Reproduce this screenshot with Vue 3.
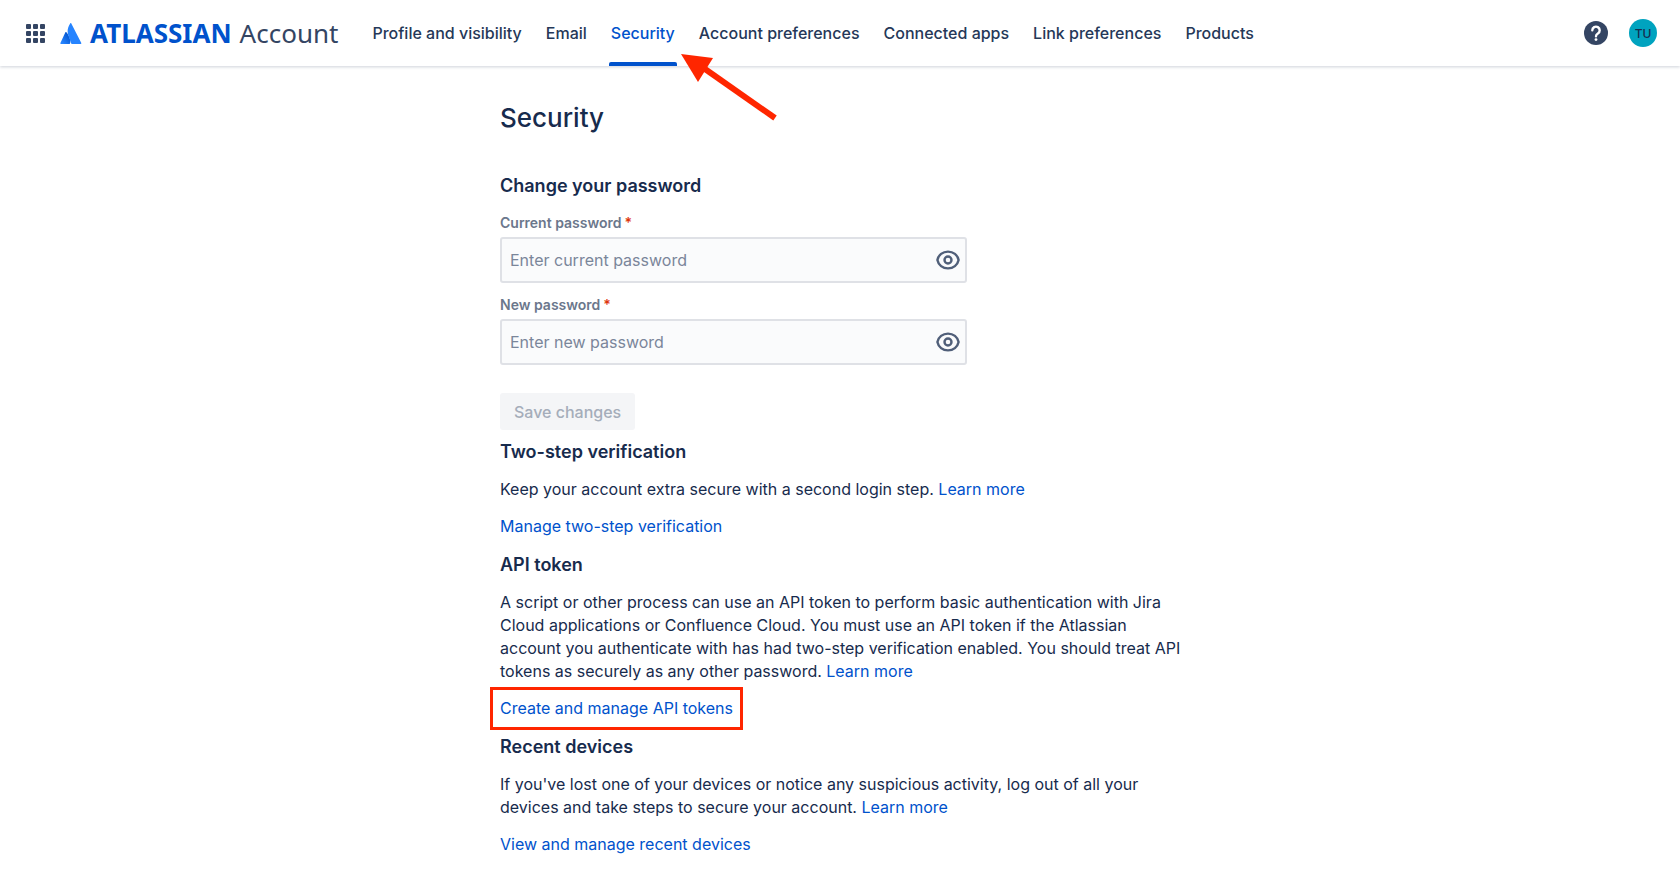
<template>
  <div class="page">
    <header class="top-nav">
      <button class="icon-button switcher" aria-label="Switch to another product">
        <svg width="20" height="20" viewBox="0 0 20 20" fill="#344563">
          <template v-for="row in 3" :key="row">
            <rect v-for="col in 3" :key="col" :x="col * 7 - 6" :y="row * 7 - 6" width="5" height="5" rx="1" />
          </template>
        </svg>
      </button>

      <a href="#" class="brand">
        <svg width="22" height="21" viewBox="0 0 22 21">
          <defs>
            <linearGradient id="wing" x1="0.9" y1="0.2" x2="0.2" y2="0.9">
              <stop offset="0" stop-color="#0052cc" />
              <stop offset="1" stop-color="#2684ff" />
            </linearGradient>
          </defs>
          <path d="M6.400 9.200c-.3-.4-.8-.3-1 .1L.4 20.100c-.2.5 0 .9.5.9h8.600c.3 0 .5-.1.6-.4C11 17.500 9.200 12.600 6.400 9.200z" fill="url(#wing)" />
          <path d="M10.200.4C7.200 4.600 7 9.600 8.600 13.200l2.600 7.300c.1.300.4.500.7.500h8.800c.5 0 .8-.5.600-.9L11.300.4c-.2-.5-.8-.5-1.100 0z" fill="#2684ff" />
        </svg>
        <span class="brand-name">ATLASSIAN</span>
        <span class="brand-product">Account</span>
      </a>

      <nav class="tabs">
        <a v-for="tab in tabs" :key="tab" href="#" class="tab" :class="{ active: tab === activeTab }">
          {{ tab }}
          <svg v-if="tab === activeTab" class="arrow" width="98" height="68" viewBox="0 0 98 68">
            <path d="M24 15L94 64" stroke="#ff2600" stroke-width="6" />
            <path d="M0 0L32 4L17 28z" fill="#ff2600" />
          </svg>
        </a>
      </nav>

      <div class="nav-actions">
        <button class="icon-button" aria-label="Help">
          <svg width="24" height="24" viewBox="0 0 24 24">
            <circle cx="12" cy="12" r="12" fill="#344563" />
            <path d="M8.300 9.300a3.700 3.700 0 1 1 5.600 3.200c-1.200.7-1.900 1.200-1.900 2.700" fill="none" stroke="#fff" stroke-width="2.400" stroke-linecap="round" />
            <circle cx="12" cy="18.600" r="1.400" fill="#fff" />
          </svg>
        </button>
        <button class="icon-button avatar" aria-label="Your profile">TU</button>
      </div>
    </header>

    <main class="content">
      <h1>Security</h1>

      <form class="password-form" @submit.prevent>
        <h2>Change your password</h2>
        <div v-for="field in fields" :key="field.id" class="field">
          <label :for="field.id">{{ field.label }}<span class="required">*</span></label>
          <div class="input-wrap">
            <input :id="field.id" v-model="field.value" :type="field.visible ? 'text' : 'password'"
              :placeholder="field.placeholder" />
            <button type="button" class="icon-button" aria-label="Show password" @click="field.visible = !field.visible">
              <svg width="24" height="20" viewBox="0 0 24 20" fill="none" stroke="#505f79" stroke-width="2.4">
                <path d="M1.400 10C2.400 5 6.700 1.600 12 1.600S21.600 5 22.600 10c-1 5-5.300 8.400-10.600 8.400S2.400 15 1.400 10z" />
                <circle cx="12" cy="10" r="3.500" />
              </svg>
            </button>
          </div>
        </div>
        <button type="submit" class="save" :disabled="!canSave">Save changes</button>
      </form>

      <section v-for="section in sections" :key="section.title" class="section">
        <h2>{{ section.title }}</h2>
        <p>{{ section.text }} <a href="#">Learn more</a></p>
        <div>
          <a href="#" :class="{ highlighted: section.highlighted }">{{ section.action }}</a>
        </div>
      </section>
    </main>
  </div>
</template>

<script setup>
import { ref, computed } from 'vue';

const tabs = [
  'Profile and visibility',
  'Email',
  'Security',
  'Account preferences',
  'Connected apps',
  'Link preferences',
  'Products',
];
const activeTab = ref('Security');

const fields = ref([
  { id: 'current-password', label: 'Current password', placeholder: 'Enter current password', value: '', visible: false },
  { id: 'new-password', label: 'New password', placeholder: 'Enter new password', value: '', visible: false },
]);

const canSave = computed(() => fields.value.every((field) => field.value));

const sections = [
  {
    title: 'Two-step verification',
    text: 'Keep your account extra secure with a second login step.',
    action: 'Manage two-step verification',
  },
  {
    title: 'API token',
    text: 'A script or other process can use an API token to perform basic authentication with Jira Cloud applications or Confluence Cloud. You must use an API token if the Atlassian account you authenticate with has had two-step verification enabled. You should treat API tokens as securely as any other password.',
    action: 'Create and manage API tokens',
    highlighted: true,
  },
  {
    title: 'Recent devices',
    text: "If you've lost one of your devices or notice any suspicious activity, log out of all your devices and take steps to secure your account.",
    action: 'View and manage recent devices',
  },
];
</script>

<style>
body {
  margin: 0;
  background: #fff;
}
</style>

<style scoped>
.page {
  font-family: Inter, "Liberation Sans", sans-serif;
  font-size: 16px;
  line-height: 23px;
  color: #172b4d;
}

a {
  color: #0052cc;
  text-decoration: none;
}

.icon-button {
  display: flex;
  align-items: center;
  justify-content: center;
  padding: 0;
  border: none;
  background: none;
  cursor: pointer;
}

.top-nav {
  display: flex;
  align-items: center;
  height: 66px;
  padding: 0 23px 0 25px;
  box-shadow: 0 1px 3px rgba(9, 30, 66, 0.2);
}

.brand {
  display: flex;
  align-items: center;
  margin-left: 15px;
  font-family: "Noto Sans", sans-serif;
  font-size: 26px;
}

.brand-name {
  margin-left: 8px;
  font-weight: 700;
}

.brand-product {
  margin-left: 8px;
  color: #344563;
}

.tabs {
  display: flex;
  align-self: stretch;
  gap: 20px;
  margin-left: 32px;
}

.tab {
  position: relative;
  display: flex;
  align-items: center;
  padding: 0 2px;
  font-size: 16px;
  font-weight: 500;
  color: #253858;
  white-space: nowrap;
}

.tab.active {
  color: #0052cc;
}

.tab.active::after {
  content: "";
  position: absolute;
  right: 0;
  bottom: 0;
  left: 0;
  height: 4px;
  border-radius: 2px 2px 0 0;
  background: #0052cc;
}

/* pointer lying over the header and the page */
.arrow {
  position: absolute;
  top: 54px;
  left: 100%;
  margin-left: 4px;
  z-index: 1;
}

.nav-actions {
  display: flex;
  align-items: center;
  gap: 21px;
  margin-left: auto;
}

.avatar {
  width: 28px;
  height: 28px;
  border-radius: 50%;
  background: #00a3bf;
  color: #172b4d;
  font-family: inherit;
  font-size: 12px;
  font-weight: 500;
}

.content {
  max-width: 680px;
  margin: 0 auto;
  padding: 36px 0 32px;
}

h1 {
  margin: 0 0 40px;
  font-size: 26px;
  font-weight: 500;
  line-height: 32px;
}

h2 {
  margin: 0;
  font-size: 18px;
  font-weight: 600;
  line-height: 24px;
}

.password-form {
  margin-bottom: 10px;
}

.field {
  max-width: 467px;
  margin-top: 14px;
}

.password-form h2 {
  margin-bottom: 17px;
}

label {
  display: block;
  margin-bottom: 6px;
  font-size: 14px;
  font-weight: 600;
  line-height: 16px;
  color: #6b778c;
}

.required {
  margin-left: 3px;
  color: #de350b;
}

.input-wrap {
  display: flex;
  align-items: center;
  box-sizing: border-box;
  height: 46px;
  padding-right: 5px;
  border: 2px solid #dfe1e6;
  border-radius: 3px;
  background: #fafbfc;
}

input {
  flex: 1;
  min-width: 0;
  padding: 0 8px;
  border: none;
  outline: none;
  background: none;
  font-family: inherit;
  font-size: 16px;
  color: #172b4d;
}

input::placeholder {
  color: #7a869a;
}

.save {
  height: 37px;
  margin-top: 28px;
  padding: 0 14px;
  border: none;
  border-radius: 3px;
  background: #0052cc;
  color: #fff;
  font-family: inherit;
  font-size: 16px;
  font-weight: 500;
}

.save:disabled {
  background: #f4f5f7;
  color: #a5adba;
}

.section {
  display: flex;
  flex-direction: column;
  gap: 14px;
  margin-right: -8px;
  margin-bottom: 15px;
}

.section p {
  margin: 0;
}

.highlighted {
  display: inline-block;
  outline: 3px solid #ff2600;
  outline-offset: 7px;
}
</style>
